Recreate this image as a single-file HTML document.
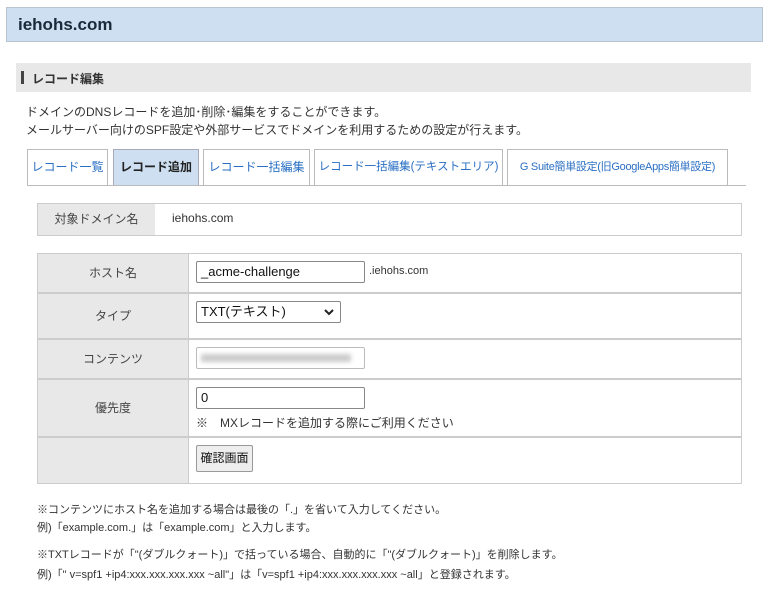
<!DOCTYPE html>
<html><head><meta charset="utf-8"><style>
*{box-sizing:border-box;margin:0;padding:0}
body{width:768px;height:592px;background:#fff;font-family:"Liberation Sans","Noto Sans CJK JP",sans-serif;color:#333;position:relative;overflow:hidden;font-size:12px}
.a{position:absolute}
.hdr{left:6px;top:7px;width:757px;height:35px;background:#cddff0;border:1px solid #b8c4cf;font-weight:bold;font-size:17px;color:#1a2a3a;padding:7px 0 0 11px}
.sec{left:16px;top:63px;width:735px;height:29px;background:#e8e8e8;font-weight:bold;font-size:12px;padding:7px 0 0 16px;color:#333}
.sec:before{content:"";position:absolute;left:5px;top:8px;width:3px;height:13px;background:#444}
.tab{top:149px;height:36px;border:1px solid #bbb;border-bottom:none;color:#2a6fc4;font-size:12px;line-height:34px;text-align:center;background:#fff;white-space:nowrap;overflow:hidden}
.tab.on{background:#cddff0;color:#222;font-weight:bold;border-color:#aab}
.lc{background:#e8e8e8;text-align:center;font-size:12px;color:#444}
.in{background:#fff;border:1px solid #888;border-radius:2px;height:22px;font-size:13px;line-height:20px;padding:0 4px;color:#111}
.n{font-size:11px;left:37px;color:#333;white-space:nowrap}
</style></head><body>
<div class="a hdr">iehohs.com</div>
<div class="a sec">レコード編集</div>
<div class="a" style="left:26px;top:103px;line-height:18px;font-size:12px">ドメインのDNSレコードを追加･削除･編集をすることができます。<br>メールサーバー向けのSPF設定や外部サービスでドメインを利用するための設定が行えます。</div>
<div class="a tab" style="left:27px;width:81px">レコード一覧</div>
<div class="a tab on" style="left:113px;width:86px">レコード追加</div>
<div class="a tab" style="left:203px;width:107px">レコード一括編集</div>
<div class="a tab" style="left:314px;width:189px;font-size:11.5px">レコード一括編集(テキストエリア)</div>
<div class="a tab" style="left:507px;width:221px;font-size:11px;letter-spacing:-0.3px">G Suite簡単設定(旧GoogleApps簡単設定)</div>
<div class="a" style="left:27px;top:185px;width:719px;height:1px;background:#bbb"></div>

<div class="a" style="left:37px;top:203px;width:705px;height:33px;border:1px solid #ccc"></div>
<div class="a lc" style="left:38px;top:204px;width:117px;height:31px;line-height:31px">対象ドメイン名</div>
<div class="a" style="left:172px;top:211px;font-size:12px">iehohs.com</div>

<div class="a" style="left:37px;top:253px;width:705px;height:231px;border:1px solid #ccc;background:#ccc"></div>
<div class="a lc" style="left:38px;top:254px;width:150px;height:38px;line-height:38px">ホスト名</div>
<div class="a" style="left:189px;top:254px;width:552px;height:38px;background:#fff"></div>
<div class="a lc" style="left:38px;top:294px;width:150px;height:44px;line-height:44px">タイプ</div>
<div class="a" style="left:189px;top:294px;width:552px;height:44px;background:#fff"></div>
<div class="a lc" style="left:38px;top:340px;width:150px;height:38px;line-height:38px">コンテンツ</div>
<div class="a" style="left:189px;top:340px;width:552px;height:38px;background:#fff"></div>
<div class="a lc" style="left:38px;top:380px;width:150px;height:56px;line-height:56px">優先度</div>
<div class="a" style="left:189px;top:380px;width:552px;height:56px;background:#fff"></div>
<div class="a lc" style="left:38px;top:438px;width:150px;height:45px"></div>
<div class="a" style="left:189px;top:438px;width:552px;height:45px;background:#fff"></div>

<div class="a in" style="left:196px;top:261px;width:169px">_acme-challenge</div>
<div class="a" style="left:369px;top:265px;font-size:11px">.iehohs.com</div>
<div class="a in" style="left:196px;top:301px;width:145px">TXT(テキスト)<svg style="position:absolute;right:6px;top:7px" width="10" height="7"><path d="M1 1l4 4 4-4" stroke="#222" stroke-width="2" fill="none"/></svg></div>
<div class="a in" style="left:196px;top:347px;width:169px;border-color:#bbb"><div style="position:absolute;left:4px;top:6px;width:150px;height:8px;background:#ccc;filter:blur(2px)"></div></div>
<div class="a in" style="left:196px;top:387px;width:169px">0</div>
<div class="a" style="left:196px;top:414px;font-size:12px">※　MXレコードを追加する際にご利用ください</div>
<div class="a" style="left:196px;top:445px;width:57px;height:27px;border:1px solid #999;border-radius:2px;background:#eee;font-size:12px;line-height:25px;text-align:center;color:#111">確認画面</div>

<div class="a n" style="top:501px">※コンテンツにホスト名を追加する場合は最後の「.」を省いて入力してください。</div>
<div class="a n" style="top:519px">例)「example.com.」は「example.com」と入力します。</div>
<div class="a n" style="top:546px">※TXTレコードが「"(ダブルクォート)」で括っている場合、自動的に「"(ダブルクォート)」を削除します。</div>
<div class="a n" style="top:566px">例)「" v=spf1 +ip4:xxx.xxx.xxx.xxx ~all"」は「v=spf1 +ip4:xxx.xxx.xxx.xxx ~all」と登録されます。</div>
</body></html>
